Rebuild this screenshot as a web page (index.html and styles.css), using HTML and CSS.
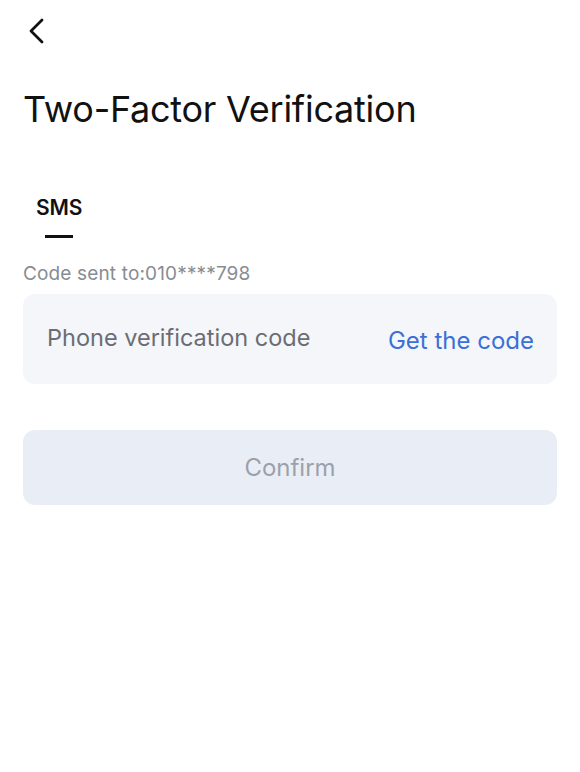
FILE: index.html
```html
<!DOCTYPE html>
<html>
<head>
<meta charset="utf-8">
<link rel="stylesheet" href="styles.css">
</head>
<body>
<div class="page">
  <div class="topbar">
    <svg class="back" width="20" height="28" viewBox="0 0 20 28"><path d="M16 3 L5 14 L16 25" fill="none" stroke="#111" stroke-width="2.8" stroke-linecap="round" stroke-linejoin="round"/></svg>
  </div>
  <h1 class="title">Two-Factor Verification</h1>
  <div class="tabs">
    <div class="tab active">
      <span class="tab-label">SMS</span>
      <span class="tab-line"></span>
    </div>
  </div>
  <div class="sent">Code sent to:010****798</div>
  <div class="field">
    <span class="placeholder">Phone verification code</span>
    <span class="getcode">Get the code</span>
  </div>
  <div class="confirm">Confirm</div>
</div>
</body>
</html>
```

FILE: styles.css
```css
html, body { margin: 0; padding: 0; background: #fff; }
body { font-family: Inter, "Noto Sans", sans-serif; color: #111; }
.page { padding: 0 23px; display: flex; flex-direction: column; }
.topbar { height: 62px; display: flex; align-items: center; padding-left: 3px; }
.back { display: block; margin-top: 0; }
.title { margin: 25px 0 0; font-size: 36px; font-weight: 400; line-height: 44px; color: #111; letter-spacing: -0.25px; }
.tabs { display: flex; margin-top: 65px; }
.tab { display: flex; flex-direction: column; align-items: center; padding-left: 13px; }
.tab-label { font-size: 21px; font-weight: 600; line-height: 24px; color: #111; letter-spacing: -0.2px; }
.tab-line { width: 28px; height: 3px; background: #111; margin-top: 15px; }
.sent { margin-top: 24px; font-size: 19px; line-height: 24px; color: #888c92; letter-spacing: 0.15px; }
.field { margin-top: 8px; height: 90px; background: #f5f6fa; border-radius: 12px; display: flex; align-items: center; justify-content: space-between; padding: 0 23px 0 24px; }
.placeholder { font-size: 23.5px; color: #6a6d72; margin-top: -4px; }
.getcode { font-size: 24px; color: #3c70d6; margin-top: 2px; }
.confirm { margin-top: 46px; height: 75px; background: #e9eef6; border-radius: 12px; display: flex; align-items: center; justify-content: center; font-size: 24px; color: #9ca1a9; }
```
